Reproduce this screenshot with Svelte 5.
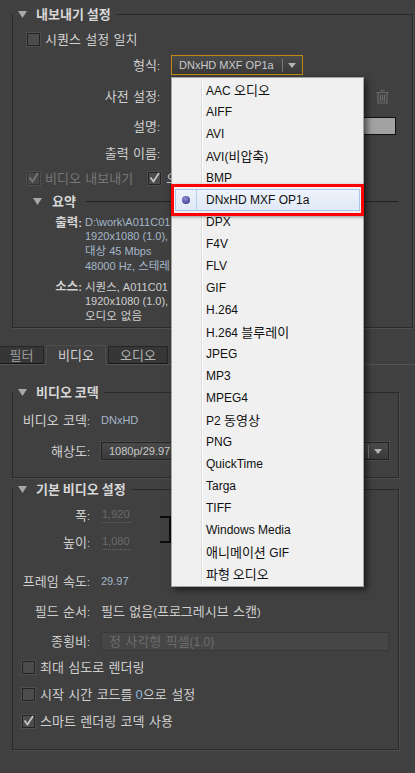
<script>
  const formats = ['AAC 오디오','AIFF','AVI','AVI(비압축)','BMP','DNxHD MXF OP1a','DPX','F4V','FLV','GIF','H.264','H.264 블루레이','JPEG','MP3','MPEG4','P2 동영상','PNG','QuickTime','Targa','TIFF','Windows Media','애니메이션 GIF','파형 오디오'];
  const selected = 'DNxHD MXF OP1a';
  const parts = (s) => s.split(/([\uAC00-\uD7A3]+(?: [\uAC00-\uD7A3]+)*)/).filter(Boolean).map((text) => ({ text, hangul: /[\uAC00-\uD7A3]/.test(text) }));
</script>

{#snippet t(s)}{#each parts(s) as p}{#if p.hangul}<span class="h">{p.text}</span>{:else}{p.text}{/if}{/each}{/snippet}
{#snippet tri()}
  <svg class="tri" width="9" height="7" viewBox="0 0 9 7"><path d="M0 0H9L4.500 7Z" fill="#a8a8a8"/></svg>
{/snippet}
{#snippet arrow()}
  <span class="arrow"><svg width="8" height="5" viewBox="0 0 8 5"><path d="M0 0H8L4 5Z" fill="#b4b4b4"/></svg></span>
{/snippet}
{#snippet check(on, dim)}
  <span class="box" class:dim>
    {#if on}<svg width="13" height="13" viewBox="0 0 13 13"><path d="M2.500 6.500L5.500 10.500L11 2" fill="none" stroke={dim ? '#777' : '#c4c4c4'} stroke-width="1.800"/></svg>{/if}
  </span>
{/snippet}

<div class="page">
  <section class="group first">
    <div class="legend">{@render tri()}<h2>내보내기 설정</h2></div>
    <div class="row r-seq"><label class="chk">{@render check(false, false)}{@render t('시퀀스 설정 일치')}</label></div>
    <div class="row r-form"><span class="lab">{@render t('형식:')}</span><div class="select focus"><span class="val">DNxHD MXF OP1a</span>{@render arrow()}</div></div>
    <div class="row r-preset"><span class="lab">{@render t('사전 설정:')}</span>
      <svg class="trash" width="13" height="15" viewBox="0 0 13 15"><path d="M4.500 1.500h4M0.500 3.500h12M2 4v10h9V4M4.500 5.500v7M6.500 5.500v7M8.500 5.500v7" fill="none" stroke="#6a6a6a" stroke-width="1.200"/></svg>
    </div>
    <div class="row r-desc"><span class="lab">{@render t('설명:')}</span><div class="descbox"></div></div>
    <div class="row r-name"><span class="lab">{@render t('출력 이름:')}</span></div>
    <div class="row r-exp">
      <label class="chk off">{@render check(true, true)}{@render t('비디오 내보내기')}</label>
      <label class="chk">{@render check(true, false)}{@render t('오')}</label>
    </div>
    <div class="summary">
      <div class="sumhead">{@render tri()}<h3>요약</h3><span class="rule"></span></div>
      <div class="sumrow"><b>{@render t('출력:')}</b><p class="blue">D:\work\A011C01<br>1920x1080 (1.0),<br>{@render t('대상')} 45 Mbps<br>48000 Hz, {@render t('스테레')}</p></div>
      <div class="sumrow src"><b>{@render t('소스:')}</b><p>{@render t('시퀀스')}, A011C01<br>1920x1080 (1.0),<br>{@render t('오디오 없음')}</p></div>
    </div>
  </section>

  <nav class="tabs">
    <span class="tab t1">필터</span>
    <span class="tab active">비디오</span>
    <span class="tab">오디오</span>
  </nav>

  <section class="group second-g">
    <div class="legend">{@render tri()}<h2>비디오 코덱</h2></div>
    <div class="row r2-codec"><span class="lab2">{@render t('비디오 코덱:')}</span><span class="blue v">DNxHD</span></div>
    <div class="row r2-res"><span class="lab2">{@render t('해상도:')}</span><div class="select wide"><span class="val">1080p/29.97</span>{@render arrow()}</div></div>
  </section>

  <section class="group third">
    <div class="legend">{@render tri()}<h2>기본 비디오 설정</h2></div>
    <div class="dims">
      <div class="dimrows">
        <div class="row r3"><span class="lab2">{@render t('폭:')}</span><span class="num">1,920</span></div>
        <div class="row r3 r3b"><span class="lab2">{@render t('높이:')}</span><span class="num">1,080</span></div>
      </div>
      <span class="bracket"></span>
    </div>
    <div class="row r3-fps"><span class="lab2">{@render t('프레임 속도:')}</span><span class="blue v">29.97</span></div>
    <div class="row r3-field"><span class="lab2">{@render t('필드 순서:')}</span><span class="v wide-v">{@render t('필드 없음(프로그레시브 스캔)')}</span></div>
    <div class="row r3-par"><span class="lab2">{@render t('종횡비:')}</span><div class="select wide dis"><span class="val">{@render t('정 사각형 픽셀(1.0)')}</span></div></div>
    <label class="chk c3">{@render check(false, false)}{@render t('최대 심도로 렌더링')}</label>
    <label class="chk c3">{@render check(false, false)}<span>{@render t('시작 시간 코드를 ')}<i>0</i>{@render t('으로 설정')}</span></label>
    <label class="chk c3">{@render check(true, false)}{@render t('스마트 렌더링 코덱 사용')}</label>
  </section>

  <ul class="menu">
    {#each formats as f}
      <li class:sel={f === selected}><span class="gut">{#if f === selected}<span class="dot"></span>{/if}</span><span class="txt">{@render t(f)}</span></li>
    {/each}
  </ul>
  <div class="redbox"></div>
</div>

<style>
  :global(body) { margin: 0; background: #404040; }
  .page {
    position: relative; width: 415px; height: 773px; overflow: hidden; background: #404040; color: #cfcfcf;
    font: 11px/16px "Liberation Sans", "Noto Sans CJK KR", sans-serif; padding-top: 14px; box-sizing: border-box;
  }
  .h { font-size: 13px; font-family: "Noto Sans CJK KR", sans-serif; word-spacing: 1.500px; }
  h2, h3 { margin: 0; font: 700 13px/16px "Noto Sans CJK KR", sans-serif; color: #d8d8d8; }
  p { margin: 0; }
  .group { margin-left: 12px; width: 387px; border: 1px solid #2a2a2a; box-shadow: 1px 1px 0 #4e4e4e; box-sizing: border-box; position: relative; }
  .first { height: 314px; width: 401px; }
  .second-g { height: 86px; margin-top: 27px; }
  .third { height: 261px; margin-top: 11px; }
  .legend { display: flex; align-items: center; gap: 9px; margin: -9px 0 0 0; width: max-content; padding: 0 5px; background: #404040; height: 16px; }
  .tri { display: block; }
  .row { display: flex; align-items: center; height: 16px; }
  .lab { width: 147px; text-align: right; white-space: nowrap; }
  .lab2 { width: 77px; text-align: right; white-space: nowrap; }
  .chk { display: flex; align-items: center; gap: 5px; white-space: nowrap; }
  .chk.off { color: #767676; }
  .box { width: 11px; height: 11px; border: 1px solid #242424; background: #4c4c4c; box-shadow: 0 0 0 1px #4e4e4e; display: block; position: relative; flex: none; }
  .box svg { position: absolute; left: -1px; top: -2px; }
  .box.dim { background: #484848; border-color: #363636; }

  .r-seq { margin: 9px 0 0 14px; }
  .r-form { margin-top: 10px; }
  .r-preset { margin-top: 15px; }
  .r-desc { margin-top: 14px; }
  .r-name { margin-top: 11px; }
  .r-exp { margin: 9px 0 0 14px; gap: 15px; }
  .trash { margin-left: 216px; }
  .descbox { margin-left: 60px; width: 176px; height: 18px; background: #a2a2a2; border: 1px solid #111; box-sizing: border-box; }

  .select { height: 19px; background: linear-gradient(#4a4a4a, #3a3a3a); border: 1px solid #222; box-shadow: 0 0 0 1px #4c4c4c; display: flex; align-items: center; box-sizing: border-box; margin-left: 11px; padding-left: 7px; color: #c9c9c9; position: relative; }
  .select.focus { width: 132px; border-color: #c08a10; box-shadow: none; height: 20px; }
  .val { flex: 1; white-space: nowrap; }
  .arrow { display: flex; align-items: center; justify-content: center; width: 18px; height: 13px; border-left: 1px solid #777; margin-right: 1px; }
  .select.wide { width: 288px; height: 18px; }
  .select.dis { background: #464646; border-color: #383838; color: #6c6c6c; box-shadow: none; height: 19px; font-size: 12px; }

  .summary { margin: 7px 0 0 20px; width: 365px; }
  .sumhead { display: flex; align-items: center; gap: 10px; height: 16px; }
  .rule { flex: 1; border-top: 1px solid #222; }
  .sumrow { display: flex; margin-top: 6px; line-height: 14px; }
  .sumrow.src { margin-top: 6px; }
  .sumrow b { width: 31px; margin-left: 18px; text-align: right; font-weight: 700; color: #d4d4d4; flex: none; white-space: nowrap; }
  .sumrow b .h { font-weight: 700; font-size: 12.500px; }
  .sumrow p { margin-left: 3px; white-space: nowrap; }
  .sumrow .h { font-size: 11.500px; }
  .blue { color: #a4b6c8; }
  .v { margin-left: 11px; white-space: nowrap; }

  .tabs { display: flex; gap: 2px; height: 19px; margin-top: 17px; border-bottom: 1px solid #555; align-items: flex-end; }
  .tab { width: 60px; height: 18px; box-sizing: border-box; background: #363636; border: 1px solid #262626; border-bottom-color: #161616; text-align: center; font: 13px/16px "Noto Sans CJK KR", sans-serif; color: #b4b4b4; }
  .t1 { width: 44px; border-left: 0; color: #9c9c9c; }
  .tab.active { background: #404040; height: 20px; border-color: #4e4e4e; border-bottom-color: #404040; color: #d4d4d4; position: relative; z-index: 1; margin-bottom: -1px; line-height: 17px; }

  .r2-codec { margin-top: 12px; }
  .r2-res { margin-top: 15px; }
  .dims { display: flex; align-items: flex-start; }
  .r3 { margin-top: 10px; }
  .r3b { margin-top: 11px; }
  .num { margin-left: 12px; color: #6a6a6a; border-bottom: 1px dotted #666; width: 29px; height: 15px; line-height: 15px; }
  .bracket { width: 9px; height: 23px; margin: 19px 0 0 29px; border: 2px solid #0c0c0c; border-left: 0; }
  .r3-fps { margin-top: 23px; }
  .r3-field { margin-top: 14px; }
  .r3-par { margin-top: 14px; }
  .c3 { margin: 11px 0 0 9px; height: 16px; }
  .r3-par + .c3 { margin-top: 10px; }
  i { font-style: normal; color: #8fb4d8; font-size: 13px; }

  .menu { position: absolute; left: 171px; top: 77px; width: 193px; margin: 0; padding: 1px 0; list-style: none; background: #f0f0f0; border: 1px solid #a4a4a4; box-sizing: border-box; box-shadow: 3px 3px 6px rgba(0,0,0,.55); color: #111; font-size: 12px; }
  .menu .h { word-spacing: 0; }
  .menu::before { content: ""; position: absolute; left: 29px; top: 1px; bottom: 1px; width: 1px; background: #dcdcdc; box-shadow: 1px 0 0 #fff; }
  li { display: flex; align-items: center; height: 22px; white-space: nowrap; position: relative; }
  .gut { width: 34px; flex: none; display: flex; justify-content: center; }
  li.sel { background: linear-gradient(#eef3fb, #dfe8f5); box-shadow: inset 0 0 0 1px #a9c6ea; margin: 0 3px; }
  li.sel .gut { width: 21px; height: 20px; align-items: center; border-right: 1px solid #b6cff0; margin-right: 9px; }
  .dot { width: 8px; height: 8px; border-radius: 50%; background: radial-gradient(circle at 40% 35%, #8f8fd8, #2a2a80); }
  .redbox { position: absolute; left: 171px; top: 184px; width: 193px; height: 32px; box-sizing: border-box; border: 3.500px solid #f00; box-shadow: 0 1px 3px rgba(0,0,0,.4); }
</style>
